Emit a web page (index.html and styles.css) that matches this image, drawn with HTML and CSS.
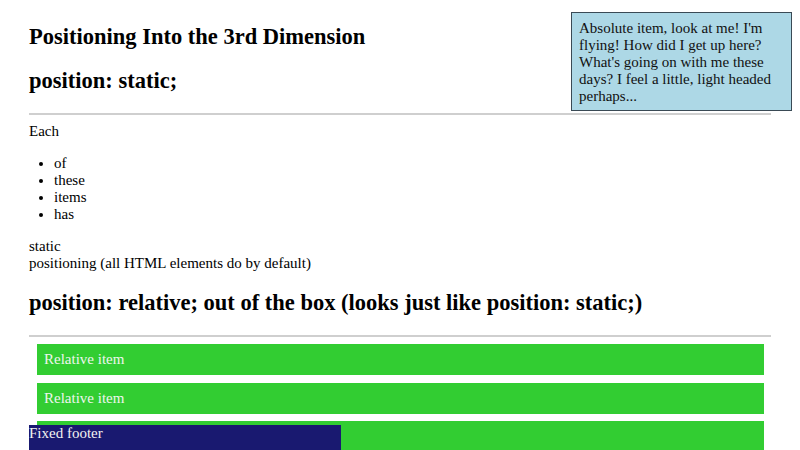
FILE: index.html
```html
<!DOCTYPE html>
<html lang="en">
<head>
<meta charset="utf-8">
<title>Positioning Into the 3rd Dimension</title>
<link rel="stylesheet" href="styles.css">
</head>
<body>
<main class="page">
  <h1 class="title">Positioning Into the 3rd Dimension</h1>

  <section class="demo">
    <h2 class="demo-title">position: static;</h2>
    <hr class="rule">
    <div class="static-item">Each</div>
    <ul class="static-list">
      <li>of</li>
      <li>these</li>
      <li>items</li>
      <li>has</li>
    </ul>
    <div class="static-item">static</div>
    <div class="static-item">positioning (all HTML elements do by default)</div>
  </section>

  <section class="demo">
    <h2 class="demo-title">position: relative; out of the box (looks just like position: static;)</h2>
    <hr class="rule">
    <div class="relative-item">Relative item</div>
    <div class="relative-item">Relative item</div>
    <div class="relative-item">Relative item</div>
  </section>

  <div class="absolute-item">Absolute item, look at me! I'm flying! How did I get up here? What's going on with me these days? I feel a little, light headed perhaps...</div>

  <footer class="fixed-footer">Fixed footer</footer>
</main>
</body>
</html>
```

FILE: styles.css
```css
html, body {
  margin: 0;
  padding: 0;
}

body {
  font-family: "Liberation Serif", "Times New Roman", serif;
  font-size: 15px;
  color: #000;
  background: #fff;
}

.page {
  padding: 5px 29px 40px;
}

.title,
.demo-title {
  font-size: 22.5px;
  font-weight: bold;
  margin: 18.7px 0;
  line-height: normal;
}

.rule {
  border: none;
  border-top: 2px solid #cfcfcf;
  height: 0;
  margin: 7.5px 0;
}

.static-item {
  margin: 0;
}

.static-list {
  margin: 15px 0;
  padding-left: 25px;
}

.relative-item {
  position: relative;
  background: #32cd32;
  color: #eef5ee;
  margin: 7.5px;
  padding: 7px 7.5px;
}

.absolute-item {
  position: absolute;
  top: 12px;
  right: 8px;
  width: 221px;
  box-sizing: border-box;
  background: #add8e6;
  border: 1px solid #3a4a55;
  color: #111;
  padding: 7px 7px 5px;
}

.fixed-footer {
  position: fixed;
  left: 29px;
  bottom: 0;
  width: 312px;
  height: 25px;
  background: #191970;
  color: #f2f2f2;
}
```
